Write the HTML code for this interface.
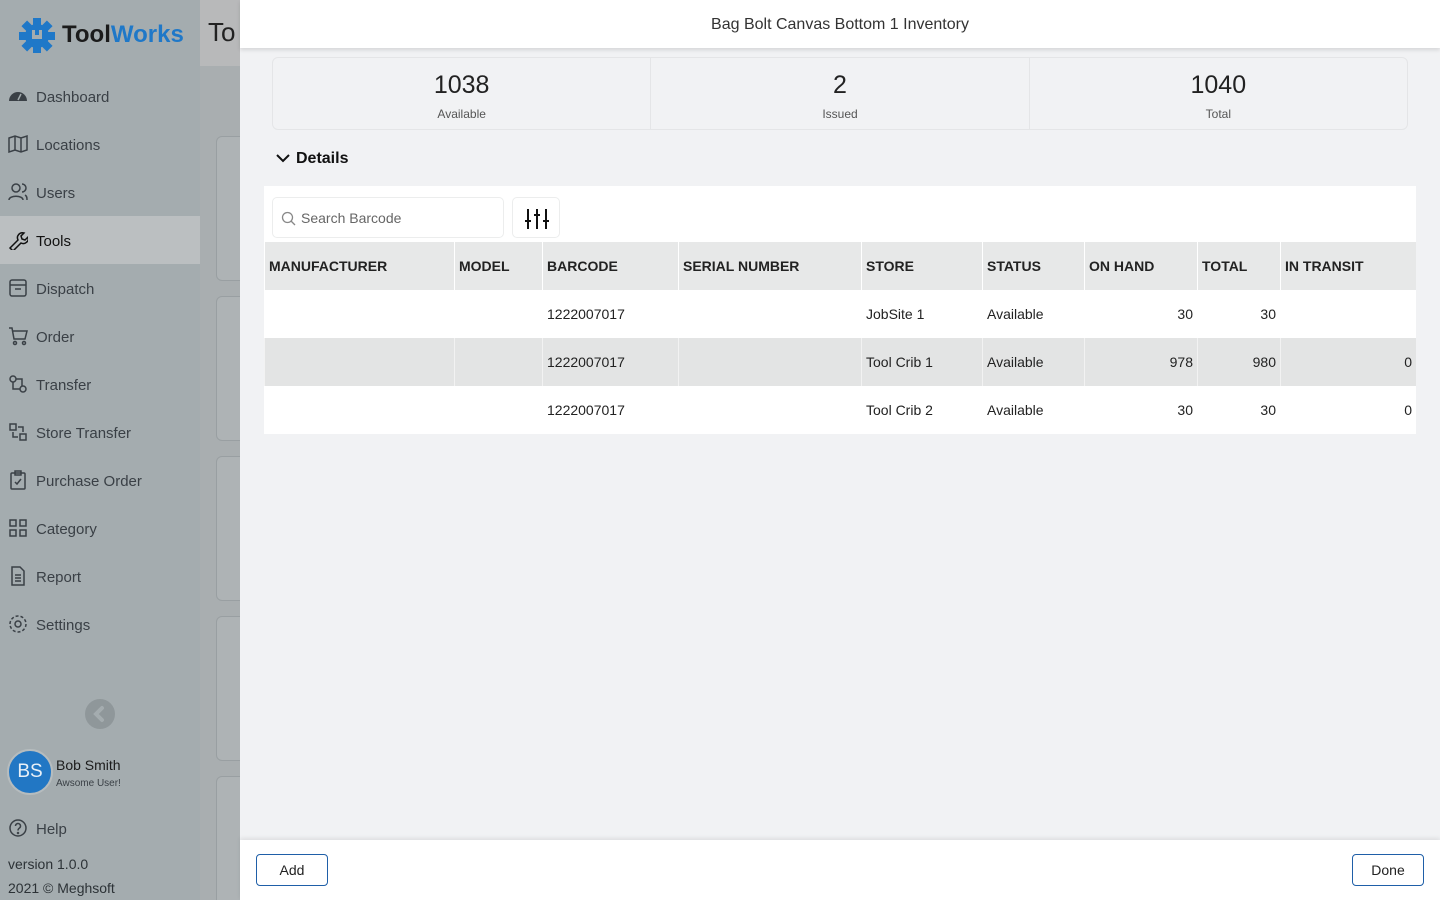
<!DOCTYPE html><html style="overflow:hidden"><head><style>
*{box-sizing:border-box;margin:0;padding:0}
body{width:1440px;height:900px;overflow:hidden;font-family:"Liberation Sans",sans-serif;background:#a4acaf;position:relative;color:#222}
.sb{position:absolute;left:0;top:0;width:200px;height:900px;background:#a4acaf}
.logo{position:absolute;left:18px;top:17px;display:flex;align-items:center;font-size:24px;font-weight:bold}
.nav{position:absolute;left:0;width:200px;height:48px;display:flex;align-items:center;padding-left:36px;font-size:15px;color:#3a4046;padding-top:2px}
.nav svg{position:absolute;left:8px;top:14px}
.sel{background:#bbbfc1;color:#111}
.bk{position:absolute;left:200px;top:0;width:40px;height:900px;background:#a9aeb0;overflow:hidden}
.bk .h{position:absolute;left:0;top:0;width:40px;height:66px;background:#b8b9ba;font-size:26px;padding:17px 0 0 8px;color:#222}
.card{position:absolute;left:16px;width:30px;height:145px;border:1px solid #999fa2;border-radius:6px;background:#aeb3b5}
.m{position:absolute;left:240px;top:0;width:1200px;height:900px;background:#f1f2f4}
.hd{position:absolute;left:0;top:0;width:1200px;height:48px;background:#fff;text-align:center;font-size:16px;line-height:50px;color:#333;box-shadow:0 2px 4px rgba(0,0,0,.12)}
.stats{position:absolute;left:32px;top:57px;width:1136px;height:73px;border:1px solid #e4e5e7;border-radius:6px;display:flex}
.stats div{flex:1;text-align:center;border-right:1px solid #e4e5e7}
.stats div:last-child{border:none}
.stats b{display:block;font-weight:normal;font-size:25px;margin-top:13px;margin-bottom:5px;color:#222}
.stats span{font-size:12px;color:#555}
.tw{position:absolute;left:24px;top:186px;width:1152px;height:248px;background:#fff}
table{position:absolute;top:56px;left:0;border-collapse:collapse;width:1152px;font-size:14px}
td,th{height:48px;padding:0 4px;border-left:1px solid #fff}
th{background:#e7e8e8;text-align:left;font-size:14px;border-left:1px solid #fff}
tr.g td{background:#e3e4e4;border-left:1px solid #f2f2f2}
.r{text-align:right}
.ft{position:absolute;left:0;top:840px;width:1200px;height:60px;background:#fff;box-shadow:0 -2px 4px rgba(0,0,0,.08)}
.btn{position:absolute;top:14px;height:32px;border:1px solid #1f5fa8;border-radius:4px;font-size:14px;line-height:30px;text-align:center;color:#222}
</style></head><body>
<div class="sb">
<div class="logo"><svg width="38" height="36" viewBox="0 0 38 36"><g fill="#1f78c8"><circle cx="19" cy="19" r="12"/><rect x="15" y="1" width="8" height="36"/><rect x="1" y="15" width="36" height="8"/><rect x="15" y="1" width="8" height="36" transform="rotate(45 19 19)"/><rect x="15" y="1" width="8" height="36" transform="rotate(-45 19 19)"/></g><path d="M14 13v9h10v-9h-3v5h-4v-5z" fill="#a4acaf"/></svg><span style="margin-left:6px;color:#1b1b1b">Tool</span><span style="color:#1f78c8">Works</span></div>
<div class="nav" style="top:72px"><svg width="20" height="20"><path d="M1 15a9 9 0 0118 0z" fill="#3a4046"/><path d="M10 14l3-6" stroke="#a4acaf" stroke-width="1.5"/></svg>Dashboard</div>
<div class="nav" style="top:120px"><svg width="20" height="20" fill="none" stroke="#3a4046" stroke-width="1.5"><path d="M1 4l6-2 6 2 6-2v14l-6 2-6-2-6 2zM7 2v14M13 4v14"/></svg>Locations</div>
<div class="nav" style="top:168px"><svg width="20" height="20" fill="none" stroke="#3a4046" stroke-width="1.5"><circle cx="8" cy="6" r="4"/><path d="M1 18c0-5 14-5 14 0M14 2a4 4 0 010 8M17 13c2 1 2 3 2 5"/></svg>Users</div>
<div class="nav sel" style="top:216px"><svg width="20" height="20" fill="none" stroke="#111" stroke-width="1.5"><path d="M2 18l8-8a5 5 0 016-7l-3 3 1 3 3 1 3-3a5 5 0 01-7 6l-8 8z"/></svg>Tools</div>
<div class="nav" style="top:264px"><svg width="20" height="20" fill="none" stroke="#3a4046" stroke-width="1.5"><rect x="2" y="2" width="16" height="16" rx="2"/><path d="M2 7h16M7 11h6"/></svg>Dispatch</div>
<div class="nav" style="top:312px"><svg width="20" height="20" fill="none" stroke="#3a4046" stroke-width="1.5"><path d="M1 2h3l2 11h11l2-8H5"/><circle cx="7" cy="17" r="1.5"/><circle cx="16" cy="17" r="1.5"/></svg>Order</div>
<div class="nav" style="top:360px"><svg width="20" height="20" fill="none" stroke="#3a4046" stroke-width="1.5"><circle cx="5" cy="5" r="3"/><circle cx="15" cy="15" r="3"/><path d="M8 5h6v7M12 15H5V8"/></svg>Transfer</div>
<div class="nav" style="top:408px"><svg width="20" height="20" fill="none" stroke="#3a4046" stroke-width="1.5"><path d="M2 2h6v6H2zM12 12h6v6h-6zM10 5h5v5M10 15H5v-5"/></svg>Store Transfer</div>
<div class="nav" style="top:456px"><svg width="20" height="20" fill="none" stroke="#3a4046" stroke-width="1.5"><rect x="3" y="3" width="14" height="16" rx="1"/><path d="M7 1h6v4H7zM7 12l2 2 4-5"/></svg>Purchase Order</div>
<div class="nav" style="top:504px"><svg width="20" height="20" fill="none" stroke="#3a4046" stroke-width="1.5"><rect x="2" y="2" width="6" height="6"/><rect x="12" y="2" width="6" height="6"/><rect x="2" y="12" width="6" height="6"/><rect x="12" y="12" width="6" height="6"/></svg>Category</div>
<div class="nav" style="top:552px"><svg width="20" height="20" fill="none" stroke="#3a4046" stroke-width="1.5"><path d="M4 1h8l4 4v14H4zM7 9h6M7 12h6M7 15h6"/></svg>Report</div>
<div class="nav" style="top:600px"><svg width="20" height="20" fill="none" stroke="#3a4046" stroke-width="1.5"><circle cx="10" cy="10" r="3"/><circle cx="10" cy="10" r="8" stroke-dasharray="3 2"/></svg>Settings</div>
<div style="position:absolute;left:85px;top:699px;width:30px;height:30px;border-radius:50%;background:#8f979a"><svg width="30" height="30" fill="none" stroke="#a4acaf" stroke-width="4" stroke-linecap="round"><path d="M17 9l-6 6 6 6"/></svg></div>
<div style="position:absolute;left:7px;top:749px;width:46px;height:46px;border-radius:50%;background:#2277c4;border:2px solid #b6bcbe;color:#e9f0f7;font-size:19px;text-align:center;line-height:42px">BS</div>
<div style="position:absolute;left:56px;top:757px;font-size:14px;color:#1b1b1b">Bob Smith</div>
<div style="position:absolute;left:56px;top:778px;font-size:10px;color:#3a4046">Awsome User!</div>
<div class="nav" style="top:804px"><svg width="20" height="20" fill="none" stroke="#3a4046" stroke-width="1.5"><circle cx="10" cy="10" r="8"/><path d="M7.5 8a2.5 2.5 0 114 2c-1 .7-1.5 1-1.5 2.5"/><circle cx="10" cy="15" r=".5"/></svg>Help</div>
<div style="position:absolute;left:8px;top:856px;font-size:14px;color:#2c3236">version 1.0.0</div>
<div style="position:absolute;left:8px;top:880px;font-size:14px;color:#2c3236">2021 © Meghsoft</div>
</div>
<div class="bk"><div class="h">To</div>
<div class="card" style="top:136px"></div><div class="card" style="top:296px"></div><div class="card" style="top:456px"></div><div class="card" style="top:616px"></div><div class="card" style="top:776px"></div></div>
<div class="m">
<div class="hd">Bag Bolt Canvas Bottom 1 Inventory</div>
<div class="stats"><div><b>1038</b><span>Available</span></div><div><b>2</b><span>Issued</span></div><div><b>1040</b><span>Total</span></div></div>
<div style="position:absolute;left:36px;top:150px;font-size:16px;font-weight:bold;color:#111"><svg width="14" height="10" style="margin-right:6px" fill="none" stroke="#111" stroke-width="2"><path d="M1 2l6 6 6-6"/></svg>Details</div>
<div class="tw">
<div style="position:absolute;left:8px;top:11px;width:232px;height:41px;border:1px solid #eceded;border-radius:5px;font-size:14px;color:#666;padding:12px 0 0 28px"><svg width="16" height="16" style="position:absolute;left:8px;top:13px" fill="none" stroke="#888" stroke-width="1.3"><circle cx="6.5" cy="6.5" r="5"/><path d="M10 10l4 4"/></svg>Search Barcode</div>
<div style="position:absolute;left:248px;top:11px;width:48px;height:41px;border:1px solid #eceded;border-radius:5px"><svg width="24" height="22" style="position:absolute;left:12px;top:10px" stroke="#111" stroke-width="2"><path d="M3 1v20M12 1v20M21 1v20M0 13h6M9 7h6M18 13h6"/></svg></div>
<table>
<tr><th style="width:190px">MANUFACTURER</th><th style="width:88px">MODEL</th><th style="width:136px">BARCODE</th><th style="width:183px">SERIAL NUMBER</th><th style="width:121px">STORE</th><th style="width:102px">STATUS</th><th style="width:113px">ON HAND</th><th style="width:83px">TOTAL</th><th>IN TRANSIT</th></tr>
<tr><td></td><td></td><td>1222007017</td><td></td><td>JobSite 1</td><td>Available</td><td class="r">30</td><td class="r">30</td><td></td></tr>
<tr class="g"><td></td><td></td><td>1222007017</td><td></td><td>Tool Crib 1</td><td>Available</td><td class="r">978</td><td class="r">980</td><td class="r">0</td></tr>
<tr><td></td><td></td><td>1222007017</td><td></td><td>Tool Crib 2</td><td>Available</td><td class="r">30</td><td class="r">30</td><td class="r">0</td></tr>
</table></div>
<div class="ft"><div class="btn" style="left:16px;width:72px">Add</div><div class="btn" style="left:1112px;width:72px">Done</div></div>
</div>
</body></html>
